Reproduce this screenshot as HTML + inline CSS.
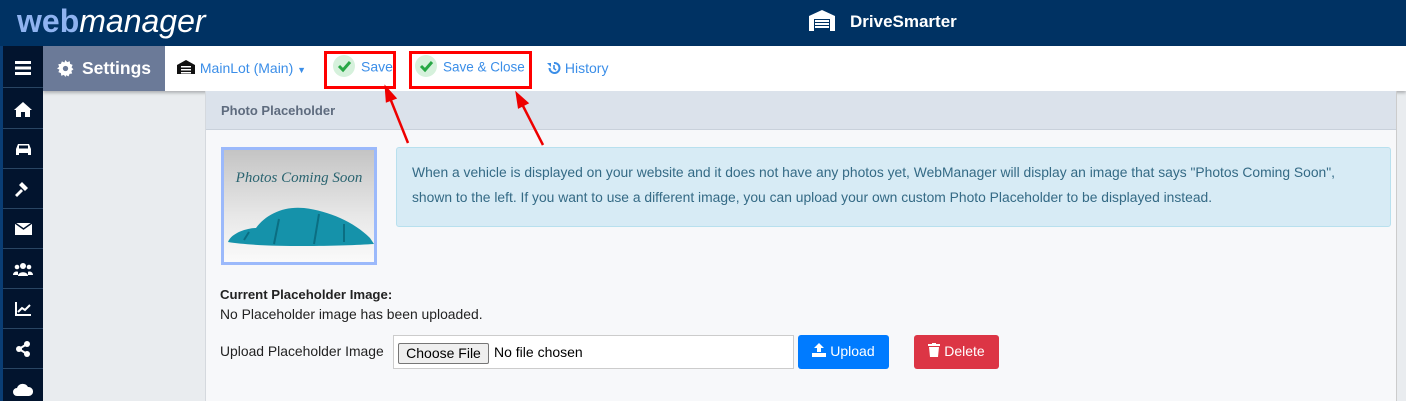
<!DOCTYPE html>
<html><head><style>
*{margin:0;padding:0;box-sizing:border-box}
html,body{width:1406px;height:401px;overflow:hidden}
body{font-family:"Liberation Sans",sans-serif;background:#e9ecef;position:relative}
.top{position:absolute;left:0;top:0;width:1406px;height:46px;background:#003263}
.logo{position:absolute;left:17px;top:3px;font-size:32px;color:#fff;font-style:italic}
.logo b{color:#8fb3f0;font-style:normal}
.ds{position:absolute;left:850px;top:12px;color:#fff;font-weight:bold;font-size:17px}
.side{position:absolute;left:0;top:46px;width:43px;height:355px;background:#02142e;border-left:3px solid #0a3d74}
.si{position:absolute;left:0;width:40px;height:39px;border-bottom:1px solid #294563;display:flex;align-items:center;justify-content:center}
.tool{position:absolute;left:43px;top:46px;width:1363px;height:45px;background:#fff;box-shadow:0 2px 3px rgba(0,0,0,.25)}
.set{position:absolute;left:0;top:0;width:122px;height:45px;background:#6b7a98;color:#fff;font-weight:bold;font-size:17.5px;line-height:45px;padding-left:39px}
.tb{position:absolute;top:14px;color:#3b8ee8;font-size:14px}
.rb{position:absolute;border:3px solid #f00;top:5px;height:38px}
.chk{display:inline-block;width:22px;height:22px;border-radius:50%;background:#d6f1dc;vertical-align:middle;position:relative;top:-2px;margin-right:6px}
.panel{position:absolute;left:205px;top:91px;width:1192px;height:310px;background:#f7f8fa;border-left:1px solid #d5d9de;border-right:1px solid #ccc}
.ph{height:39px;background:#dbe2eb;border-bottom:1px solid #c9d1db;color:#5e6b7e;font-weight:bold;font-size:13px;line-height:40px;padding-left:15px}
.img{position:absolute;left:15px;top:56px;width:156px;height:118px;border:3px solid #9bb9fb;background:linear-gradient(#c4c4c4,#e8e8e8 60%,#fafafa)}
.info{position:absolute;left:190px;top:56px;width:995px;height:80px;background:#d7ebf5;border:1px solid #b8e0ee;border-radius:3px;color:#346a85;font-size:13.85px;line-height:25px;padding:12px 15px}
.t{position:absolute;font-size:13.9px;color:#222}
</style></head><body>
<div class="top"><div class="logo"><b>web</b>manager</div>
<svg style="position:absolute;left:808px;top:9px" width="28" height="22" viewBox="0 0 28 22"><path d="M1 22V7L14 1l13 6v15z" fill="#fff"/><rect x="6" y="10" width="16" height="12" fill="#003263"/><g fill="#fff"><rect x="7" y="11" width="14" height="2"/><rect x="7" y="14" width="14" height="2"/><rect x="7" y="17" width="14" height="2"/></g></svg>
<div class="ds">DriveSmarter</div></div>
<div class="side">
<div class="si" style="top:2px;height:40px"><svg width="16" height="14"><rect y="0" width="16" height="3" fill="#fff"/><rect y="5.5" width="16" height="3" fill="#fff"/><rect y="11" width="16" height="3" fill="#fff"/></svg></div>
<div class="si" style="top:44px"><svg width="18" height="15" viewBox="0 0 18 15"><path d="M9 0L0 8h2v7h5v-5h4v5h5V8h2z" fill="#fff"/></svg></div>
<div class="si" style="top:84px"><svg width="17" height="13" viewBox="0 0 17 13"><path d="M3 1h11l2 5v6h-3v-2H4v2H1V6z" fill="#fff"/><rect x="4" y="2.5" width="9" height="3" fill="#02142e"/></svg></div>
<div class="si" style="top:124px"><svg width="16" height="16" viewBox="0 0 16 16"><path d="M7 1l6 6-3 3-6-6zM6 8l2 2-6 6-2-2z" fill="#fff"/></svg></div>
<div class="si" style="top:164px"><svg width="17" height="12" viewBox="0 0 17 12"><rect width="17" height="12" fill="#fff"/><path d="M0 0l8.5 6L17 0" stroke="#02142e" stroke-width="1.5" fill="none"/></svg></div>
<div class="si" style="top:204px"><svg width="20" height="13" viewBox="0 0 20 13"><g fill="#fff"><circle cx="10" cy="3" r="3"/><circle cx="4" cy="4" r="2.3"/><circle cx="16" cy="4" r="2.3"/><path d="M5 13c0-5 10-5 10 0zM0 12c0-4 5-4 5-3v3zM20 12c0-4-5-4-5-3v3z"/></g></svg></div>
<div class="si" style="top:244px"><svg width="16" height="14" viewBox="0 0 16 14"><path d="M1 0v13h15" stroke="#fff" stroke-width="2" fill="none"/><path d="M3 10l4-4 3 2 5-5" stroke="#fff" stroke-width="2" fill="none"/></svg></div>
<div class="si" style="top:284px"><svg width="14" height="16" viewBox="0 0 14 16"><g fill="#fff"><circle cx="11" cy="3" r="3"/><circle cx="3" cy="8" r="3"/><circle cx="11" cy="13" r="3"/></g><path d="M11 3L3 8l8 5" stroke="#fff" stroke-width="2" fill="none"/></svg></div>
<div class="si" style="top:324px"><svg width="20" height="14" viewBox="0 0 20 14"><path d="M4 14a4 4 0 010-8 6 6 0 0111-1 4.5 4.5 0 011 9z" fill="#fff"/></svg></div>
</div>
<div class="tool">
<div class="set"><svg style="position:absolute;left:14px;top:14px" width="17" height="17" viewBox="0 0 16 16"><path d="M8 0l1.5 2 2.5-.8.3 2.5 2.4.9-1 2.3 1.8 1.8-2 1.5.8 2.5-2.5.3-.9 2.4-2.3-1L8 16l-1.5-2-2.5.8-.3-2.5-2.4-.9 1-2.3L0 8l2-1.5L1.2 4l2.5-.3.9-2.4 2.3 1z" fill="#fff"/><circle cx="8" cy="8" r="2.5" fill="#6b7a98"/></svg>Settings</div>
<div class="tb" style="left:133px"><svg width="20" height="14" viewBox="0 0 20 14" style="vertical-align:-1px"><path d="M1 14V5l9-5 9 5v9z" fill="#111"/><g fill="#fff"><rect x="5" y="6" width="10" height="1.5"/><rect x="5" y="9" width="10" height="1.5"/><rect x="5" y="12" width="10" height="1.5"/></g></svg> MainLot (Main) <span style="font-size:9px">▼</span></div>
<div class="rb" style="left:281px;width:72px"></div>
<div class="tb" style="left:290px;top:11px"><span class="chk"><svg width="22" height="22"><path d="M6 11l4 4 7-8" stroke="#28a745" stroke-width="3" fill="none"/></svg></span>Save</div>
<div class="rb" style="left:366px;width:123px"></div>
<div class="tb" style="left:372px;top:11px;font-size:13.5px"><span class="chk"><svg width="22" height="22"><path d="M6 11l4 4 7-8" stroke="#28a745" stroke-width="3" fill="none"/></svg></span>Save &amp; Close</div>
<div class="tb" style="left:504px"><svg width="14" height="14" viewBox="0 0 14 14" style="vertical-align:-2px"><path d="M2.5 7A5 5 0 107 2" stroke="#3b8ee8" stroke-width="2" fill="none"/><path d="M0 2l4 0 0 4z" fill="#3b8ee8"/><path d="M7 4v3.5l2 1.5" stroke="#3b8ee8" stroke-width="1.6" fill="none"/></svg> History</div>
</div>
<div class="panel">
<div class="ph">Photo Placeholder</div>
<div class="img"><div style="position:absolute;top:20px;width:100%;text-align:center;font-family:'Liberation Serif',serif;font-style:italic;color:#2a6470;font-size:15px">Photos Coming Soon</div>
<svg style="position:absolute;left:0;top:44px" width="152" height="60" viewBox="0 0 152 60"><path d="M4 48C8 38 25 34 32 34 42 20 60 12 80 14 105 17 130 28 146 44L150 50C120 52 40 54 4 48z" fill="#1592aa"/><path d="M20 46L25 38M50 50L55 25M90 50L95 20M120 48L120 30" stroke="#0b6e82" stroke-width="2"/></svg></div>
<div class="info">When a vehicle is displayed on your website and it does not have any photos yet, WebManager will display an image that says "Photos Coming Soon",<br>shown to the left. If you want to use a different image, you can upload your own custom Photo Placeholder to be displayed instead.</div>
<div class="t" style="left:14px;top:196px;font-weight:bold;font-size:13.2px">Current Placeholder Image:</div>
<div class="t" style="left:14px;top:215px">No Placeholder image has been uploaded.</div>
<div class="t" style="left:14px;top:252px">Upload Placeholder Image</div>
<div style="position:absolute;left:187px;top:244px;width:401px;height:34px;background:#fff;border:1px solid #ccc"><div style="position:absolute;left:4px;top:7px;width:91px;height:21px;background:#efefef;border:1px solid #767676;border-radius:2px;font-size:14px;text-align:center;line-height:19px">Choose File</div><div style="position:absolute;left:100px;top:8px;font-size:14px">No file chosen</div></div>
<div style="position:absolute;left:592px;top:244px;width:91px;height:34px;background:#007bff;border-radius:3px;color:#fff;font-size:14px;line-height:33px;text-align:center"><svg width="14" height="14" viewBox="0 0 14 14" style="vertical-align:-1px"><path d="M7 0l5 5H9v4H5V5H2z" fill="#fff"/><rect x="0" y="10" width="14" height="4" fill="#fff"/></svg> Upload</div>
<div style="position:absolute;left:708px;top:244px;width:85px;height:34px;background:#dc3545;border-radius:3px;color:#fff;font-size:14px;line-height:33px;text-align:center"><svg width="12" height="14" viewBox="0 0 12 14" style="vertical-align:-1px"><rect x="0" y="1" width="12" height="2" fill="#fff"/><rect x="4" y="0" width="4" height="2" fill="#fff"/><path d="M1 4h10l-1 10H2z" fill="#fff"/></svg> Delete</div>
</div>
<svg style="position:absolute;left:0;top:0" width="1406" height="401"><g stroke="#e00" stroke-width="2.5" fill="#e00"><line x1="408" y1="143" x2="390" y2="98"/><path d="M386 88l9 10-8 3z"/><line x1="543" y1="145" x2="522" y2="104"/><path d="M517 94l10 9-8 4z"/></g></svg>
</body></html>
